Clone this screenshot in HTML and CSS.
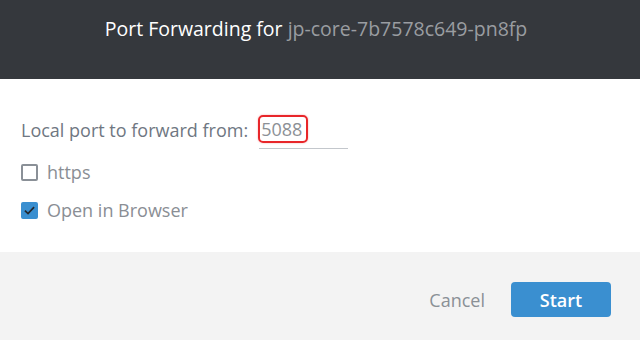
FILE: index.html
```html
<!DOCTYPE html>
<html>
<head>
<meta charset="utf-8">
<link rel="stylesheet" href="styles.css">
</head>
<body>
<div class="dialog">
  <div class="header">
    <span class="title">Port Forwarding for <span class="pod">jp-core-7b7578c649-pn8fp</span></span>
  </div>
  <div class="body">
    <div class="row">
      <label class="label">Local port to forward from:</label>
      <div class="field"><span class="value">5088</span></div>
    </div>
    <div class="check first">
      <span class="box"></span>
      <span class="ctext">https</span>
    </div>
    <div class="check">
      <span class="box checked">
        <svg width="15" height="15" viewBox="0 0 15 15"><path d="M2.2 7.6 L5.8 11 L12.8 3.6" fill="none" stroke="#23272d" stroke-width="2"/></svg>
      </span>
      <span class="ctext">Open in Browser</span>
    </div>
  </div>
  <div class="footer">
    <button class="cancel">Cancel</button>
    <button class="start">Start</button>
  </div>
</div>
</body>
</html>
```
FILE: styles.css
```css
html, body { margin: 0; padding: 0; }
body { width: 640px; height: 340px; font-family: "Open Sans", sans-serif; background: #fff; overflow: hidden; }
.dialog { display: flex; flex-direction: column; height: 340px; }
.header { height: 79px; background: #35383d; display: flex; justify-content: center; padding-top: 14px; box-sizing: border-box; }
.title { color: #ffffff; font-size: 19.5px; line-height: 30px; margin-left: -8px; }
.pod { color: #9a9da1; }
.body { height: 173px; padding: 36px 21px 0; box-sizing: border-box; }
.row { display: flex; align-items: flex-start; height: 33px; }
.label { color: #6f7782; font-size: 18px; line-height: 30px; }
.field { margin-left: 11px; width: 89px; height: 34px; border-bottom: 1px solid #c3c7cc; position: relative; box-sizing: border-box; }
.value { position: absolute; left: -1px; top: 0; color: #8c9096; font-size: 18px; line-height: 24px; padding: 0 1px; border: 2px solid #e8262a; border-radius: 5px; width: 50px; box-sizing: border-box; box-shadow: 0 0 2px rgba(232,38,42,0.4); }
.check { display: flex; align-items: center; height: 38px; }
.check.first { margin-top: 5px; }
.box { width: 17px; height: 17px; box-sizing: border-box; border: 2px solid #8a9097; border-radius: 2px; display: flex; align-items: center; justify-content: center; }
.box.checked { background: #3a8fd0; border-color: #3a8fd0; }
.ctext { margin-left: 9px; color: #8a8e94; font-size: 18px; }
.footer { flex: 1; background: #f3f3f3; display: flex; justify-content: flex-end; align-items: flex-start; padding: 30px 29px 0 0; box-sizing: border-box; gap: 25px; }
button { font-family: "Open Sans", sans-serif; font-size: 18px; border: none; cursor: pointer; }
.cancel { background: none; color: #8a9096; height: 35px; padding: 0 0 0 0; margin-right: 1px; }
.start { background: #3a8fd0; color: #fff; width: 100px; height: 35px; border-radius: 4px; font-weight: 600; }
```
